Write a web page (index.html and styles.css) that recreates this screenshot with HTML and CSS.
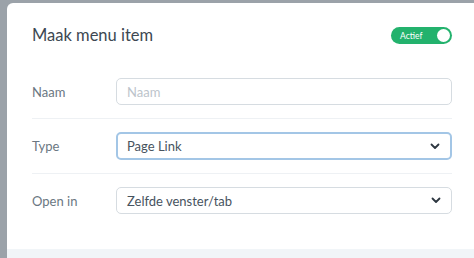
FILE: index.html
```html
<!DOCTYPE html>
<html>
<head>
<meta charset="utf-8">
<link rel="stylesheet" href="styles.css">
</head>
<body>
<div class="modal">
  <div class="modal-body">
    <div class="header">
      <h1 class="title">Maak menu item</h1>
      <div class="toggle"><span class="toggle-label">Actief</span><span class="knob"></span></div>
    </div>
    <div class="row">
      <label class="label">Naam</label>
      <input class="field" type="text" placeholder="Naam">
    </div>
    <div class="row">
      <label class="label">Type</label>
      <div class="field select focus"><span>Page Link</span>
        <svg class="chev" width="10" height="7" viewBox="0 0 10 7"><path d="M1.5 1.5 L5 5 L8.5 1.5" fill="none" stroke="#2d3740" stroke-width="1.8" stroke-linecap="round" stroke-linejoin="round"/></svg>
      </div>
    </div>
    <div class="row last">
      <label class="label">Open in</label>
      <div class="field select"><span>Zelfde venster/tab</span>
        <svg class="chev" width="10" height="7" viewBox="0 0 10 7"><path d="M1.5 1.5 L5 5 L8.5 1.5" fill="none" stroke="#2d3740" stroke-width="1.8" stroke-linecap="round" stroke-linejoin="round"/></svg>
      </div>
    </div>
  </div>
  <div class="footer"></div>
</div>
</body>
</html>
```
FILE: styles.css
```css
html, body {
  margin: 0;
  padding: 0;
  height: 100%;
  overflow: hidden;
}
body {
  background: #9ba2a9;
  font-family: "Lato", "Open Sans", sans-serif;
}
.modal {
  margin: 3px 0 0 7px;
  width: calc(100% - 7px);
  height: calc(100% - 3px);
  background: #ffffff;
  border-radius: 6px 0 0 0;
  overflow: hidden;
}
.modal-body {
  padding: 0 22px 22px 25px;
  width: 420px;
}
.header {
  height: 62px;
  display: flex;
  align-items: center;
  justify-content: space-between;
}
.title {
  margin: 0;
  padding-top: 1px;
  font-size: 16.5px;
  font-weight: 400;
  color: #3d4852;
}
.toggle {
  width: 61px;
  height: 17px;
  border-radius: 9px;
  background: #23b26d;
  display: flex;
  align-items: center;
  justify-content: space-between;
  padding: 0 2px 0 9px;
  box-sizing: border-box;
  margin-top: 3px;
}
.toggle-label {
  color: #ffffff;
  font-size: 8.5px;
  font-weight: 400;
}
.knob {
  width: 13px;
  height: 13px;
  border-radius: 50%;
  background: #ffffff;
}
.row {
  display: flex;
  align-items: center;
  padding: 13px 0;
  border-bottom: 1px solid #eef1f4;
}
.row.last {
  border-bottom: none;
}
.label {
  width: 84px;
  flex: none;
  font-size: 13px;
  color: #6b7782;
}
.field {
  flex: 1;
  height: 27px;
  box-sizing: border-box;
  border: 1px solid #d6dce1;
  border-radius: 5px;
  padding: 0 10px;
  font-family: inherit;
  font-size: 13px;
  color: #47535e;
  outline: none;
  background: #fff;
}
.field::placeholder {
  color: #bcc4cb;
}
.select {
  display: flex;
  align-items: center;
  justify-content: space-between;
  padding: 0 10px 0 10px;
}
.select.focus {
  height: 28px;
  border: 2px solid #a3c6e6;
  padding-left: 9px;
}
.chev {
  display: block;
}
.footer {
  height: 10px;
  background: #f1f5f8;
}
```
